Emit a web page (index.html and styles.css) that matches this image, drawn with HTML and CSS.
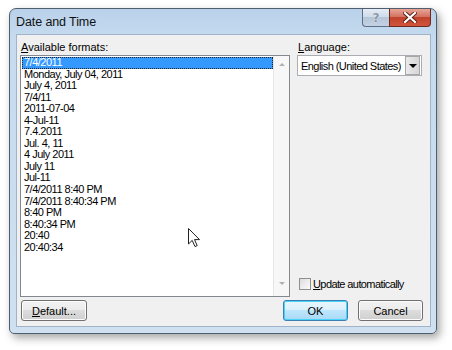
FILE: index.html
```html
<!DOCTYPE html>
<html lang="en">
<head>
  <meta charset="UTF-8" />
  <title>Date and Time</title>
  <link rel="stylesheet" href="styles.css">
</head>
<body>
  <div class="window">
    <div class="titlebar">
      <span class="title">Date and Time</span>
      <div class="caption-btns">
        <span class="btn-help">?</span>
        <span class="btn-close">
          <svg width="14" height="11" viewBox="0 0 14 11">
            <path d="M2 1 L12 10 M12 1 L2 10" stroke="#5a1d14" stroke-width="4" stroke-linecap="square"/>
            <path d="M2 1 L12 10 M12 1 L2 10" stroke="#fff" stroke-width="2.2" stroke-linecap="square"/>
          </svg>
        </span>
      </div>
    </div>

    <div class="client">
      <div class="columns">
        <div class="left">
          <div class="label"><u>A</u>vailable formats:</div>
          <div class="listbox">
            <ul class="items">
              <li class="selected">7/4/2011</li>
              <li>Monday, July 04, 2011</li>
              <li>July 4, 2011</li>
              <li>7/4/11</li>
              <li>2011-07-04</li>
              <li>4-Jul-11</li>
              <li>7.4.2011</li>
              <li>Jul. 4, 11</li>
              <li>4 July 2011</li>
              <li>July 11</li>
              <li>Jul-11</li>
              <li>7/4/2011 8:40 PM</li>
              <li>7/4/2011 8:40:34 PM</li>
              <li>8:40 PM</li>
              <li>8:40:34 PM</li>
              <li>20:40</li>
              <li>20:40:34</li>
            </ul>
            <div class="scrollbar">
              <span class="arrow up"></span>
              <span class="arrow down"></span>
            </div>
          </div>
        </div>

        <div class="right">
          <div class="label"><u>L</u>anguage:</div>
          <div class="combo">
            <span class="combo-text">English (United States)</span>
            <span class="combo-drop"><span class="tri"></span></span>
          </div>
          <div class="check">
            <span class="box"></span>
            <span><u>U</u>pdate automatically</span>
          </div>
        </div>
      </div>

      <div class="buttons">
        <button class="btn default"><u>D</u>efault...</button>
        <button class="btn ok">OK</button>
        <button class="btn">Cancel</button>
      </div>
    </div>
  </div>

  <!-- mouse pointer over the list -->
  <svg class="cursor" width="13" height="20" viewBox="0 0 13 20">
    <path d="M0.5 0.5 L0.5 16 L4.2 12.4 L7 18.6 L9.2 17.6 L6.5 11.6 L11.5 11.6 Z" fill="#fff" stroke="#222" stroke-width="1"/>
  </svg>
</body>
</html>
```

FILE: styles.css
```css
* { margin: 0; padding: 0; box-sizing: border-box; }
body {
  background: #fff;
  font-family: 'Liberation Sans', Arial, sans-serif;
  font-size: 11px;
  color: #000;
  width: 452px;
  height: 350px;
  overflow: hidden;
  position: relative;
}

.window {
  margin: 8px 0 0 9px;
  width: 428px;
  height: 326px;
  border: 1px solid #4f5f70;
  border-radius: 7px 7px 5px 5px;
  background: linear-gradient(#b9d1ea, #c6dbef 30px, #cfe0f1);
  padding: 0 5px 6px 6px;
  display: flex;
  flex-direction: column;
  box-shadow: 3px 4px 9px rgba(0, 0, 0, 0.35);
}

.titlebar {
  height: 25px;
  display: flex;
  align-items: flex-start;
}
.title {
  font-size: 12.5px;
  letter-spacing: -0.1px;
  color: #111;
  margin-top: 6px;
}
.caption-btns {
  margin-left: auto;
  display: flex;
}
.btn-help,
.btn-close {
  height: 18px;
  border: 1px solid #5d6f85;
  border-top: none;
  display: flex;
  align-items: center;
  justify-content: center;
}
.btn-help {
  width: 27px;
  border-right: none;
  border-radius: 0 0 0 4px;
  background: linear-gradient(#e4ecf5, #d0dcea 45%, #b5c6d9 50%, #c3d2e3);
  font-family: 'DejaVu Sans', sans-serif;
  font-size: 12px;
  font-weight: bold;
  color: #8a98a8;
  text-shadow: 0 0 1px #fff;
}
.btn-close {
  width: 42px;
  border-color: #6e2a20;
  border-radius: 0 0 4px 0;
  background: linear-gradient(#e8a597, #d27463 45%, #c2422c 50%, #d0543b);
}

.client {
  flex: 1;
  background: #f0f0f0;
  border: 1px solid #9fb4cb;
  padding: 6px 7px 5px 3px;
  display: flex;
  flex-direction: column;
}
.columns {
  display: flex;
  gap: 7px;
}
.label {
  height: 13px;
  line-height: 13px;
  margin-bottom: 1px;
  padding-left: 1px;
}
.left { width: 270px; }
.right {
  width: 125px;
  display: flex;
  flex-direction: column;
}

.listbox {
  height: 242px;
  border: 1px solid #828790;
  background: #fff;
  display: flex;
}
.items {
  list-style: none;
  flex: 1;
  padding: 1px 0 0 1px;
}
.items li {
  height: 11.55px;
  line-height: 11.55px;
  padding-left: 2px;
  letter-spacing: -0.5px;
  white-space: nowrap;
}
.items li.selected {
  background: #3399ff;
  color: #fff;
  outline: 1px dotted #222;
  outline-offset: -1px;
}
.scrollbar {
  width: 16px;
  border-left: 1px solid #e6e6e6;
  background: #f7f7f7;
  display: flex;
  flex-direction: column;
  justify-content: space-between;
  align-items: center;
  padding: 7px 0 11px;
}
.arrow {
  width: 0;
  height: 0;
  border-left: 3px solid transparent;
  border-right: 3px solid transparent;
}
.arrow.up { border-bottom: 3px solid #b0b0b0; }
.arrow.down { border-top: 3px solid #b0b0b0; }

.combo {
  height: 21px;
  border: 1px solid #abadb3;
  background: #fff;
  display: flex;
  align-items: center;
}
.combo-text {
  flex: 1;
  padding-left: 3px;
  letter-spacing: -0.55px;
  white-space: nowrap;
}
.combo-drop {
  width: 15px;
  height: 19px;
  margin-right: 1px;
  border: 1px solid #a7a7a7;
  background: linear-gradient(90deg, #eaeaea, #d6d6d6);
  display: flex;
  align-items: center;
  justify-content: center;
}
.tri {
  border-left: 4px solid transparent;
  border-right: 4px solid transparent;
  border-top: 4px solid #000;
}

.check {
  margin-top: auto;
  margin-bottom: 7px;
  margin-left: 2px;
  display: flex;
  align-items: center;
  gap: 2px;
  letter-spacing: -0.6px;
}
.box {
  width: 12px;
  height: 12px;
  border: 1px solid #8e8f8f;
  background: linear-gradient(135deg, #dcdcdc, #fcfcfc);
}

.buttons {
  margin-top: 3px;
  display: flex;
  gap: 10px;
}
.btn {
  width: 65px;
  height: 21px;
  border: 1px solid #707070;
  border-radius: 3px;
  background: linear-gradient(#f2f2f2, #ebebeb 50%, #dddddd 50%, #cfcfcf);
  font-family: 'Liberation Sans', Arial, sans-serif;
  font-size: 11px;
  color: #000;
  box-shadow: inset 0 0 0 1px #fcfcfc;
}
.btn.default {
  margin-left: 1px;
  margin-right: auto;
  width: 66px;
}
.btn.ok {
  border-color: #3c7fb1;
  box-shadow: inset 0 0 0 1px #48d3fb;
  background: linear-gradient(#eaf6fd, #d9f0fc 50%, #bee6fd 50%, #a7d9f5);
}

.cursor {
  position: absolute;
  left: 188px;
  top: 228px;
}
```
